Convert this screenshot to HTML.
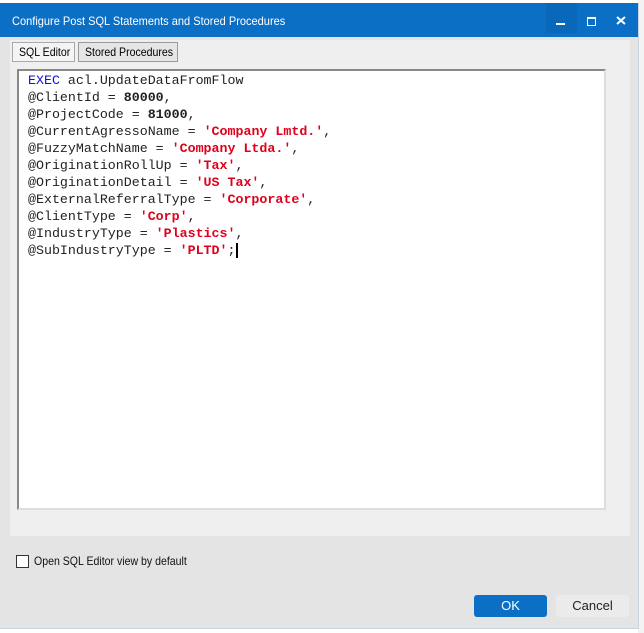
<!DOCTYPE html>
<html><head><style>
body{margin:0;width:644px;height:633px;background:#fff;position:relative;overflow:hidden;font-family:"Liberation Sans",sans-serif}
.win{position:absolute;left:0;top:3px;width:638px;height:625px;background:#e4e4e4;border-right:1px solid #c8d4e0;border-bottom:1px solid #c8d4e0}
.title{position:absolute;left:0;top:0;width:638px;height:34px;background:#0b6fc6;color:#fff;font-size:12px}
.title span{position:absolute;left:12px;top:11px;transform:scaleX(0.92);transform-origin:0 0;white-space:nowrap}
.panel{position:absolute;left:10px;top:37px;width:620px;height:496px;background:#efefef}
.tab{position:absolute;top:39px;height:20px;font-size:12px;line-height:19px;border:1px solid #999;background:#e6e6e6;box-sizing:border-box;white-space:nowrap;overflow:hidden}
.tab i{font-style:normal;display:inline-block;transform:scaleX(0.88);transform-origin:0 0;margin-left:6px}
.ed{position:absolute;left:17px;top:66px;width:589px;height:441px;background:#fff;border:2px solid #888;border-right-color:#ddd;border-bottom-color:#ddd;box-sizing:border-box}
pre{margin:0;position:absolute;left:9px;top:1px;font-family:"Liberation Mono",monospace;font-size:13.3px;line-height:17px;color:#222}
.k{color:#1010e0}.s{color:#e0001b;font-weight:bold}.n{font-weight:bold}
.btn{position:absolute;top:592px;height:22px;font-size:13px;line-height:22px;text-align:center;border-radius:3px}
</style></head><body>
<div style="position:absolute;left:638px;top:0;width:6px;height:633px;background:#f3f3f3"></div>
<div class="win">
<div class="title"><span>Configure Post SQL Statements and Stored Procedures</span>
<div style="position:absolute;left:546px;top:0;width:31px;height:30px;background:#0a68bb"></div>
<div style="position:absolute;left:556px;top:20px;width:9px;height:2px;background:#fff"></div>
<div style="position:absolute;left:587px;top:14px;width:7px;height:6px;border:1.5px solid #fff;border-top-width:2.5px"></div>
<svg style="position:absolute;left:616px;top:13px" width="10" height="9"><path d="M1 1L9 8M9 1L1 8" stroke="#fff" stroke-width="2"/></svg>
</div>
<div class="panel"></div>
<div class="tab" style="left:12px;width:63px;background:#f4f4f4;border-color:#aaa"><i>SQL Editor</i></div>
<div class="tab" style="left:78px;width:100px"><i>Stored Procedures</i></div>
<div class="ed"><pre><span class="k">EXEC</span> acl.UpdateDataFromFlow
@ClientId = <span class="n">80000</span>,
@ProjectCode = <span class="n">81000</span>,
@CurrentAgressoName = <span class="s">'Company Lmtd.'</span>,
@FuzzyMatchName = <span class="s">'Company Ltda.'</span>,
@OriginationRollUp = <span class="s">'Tax'</span>,
@OriginationDetail = <span class="s">'US Tax'</span>,
@ExternalReferralType = <span class="s">'Corporate'</span>,
@ClientType = <span class="s">'Corp'</span>,
@IndustryType = <span class="s">'Plastics'</span>,
@SubIndustryType = <span class="s">'PLTD'</span>;<span style="border-left:2px solid #000;margin-left:1px"></span></pre></div>
<div style="position:absolute;left:16px;top:552px;width:11px;height:11px;border:1px solid #333;background:#fff"></div>
<div style="position:absolute;left:34px;top:551px;font-size:12px;color:#111;transform:scaleX(0.88);transform-origin:0 0;white-space:nowrap">Open SQL Editor view by default</div>
<div class="btn" style="left:474px;width:73px;background:#0b6fc6;color:#fff">OK</div>
<div class="btn" style="left:556px;width:73px;background:#ebebeb;color:#222">Cancel</div>
</div>
</body></html>
